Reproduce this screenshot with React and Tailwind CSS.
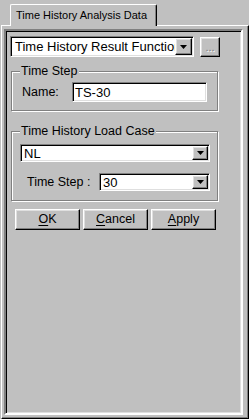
import React from "react";

const sunken =
  "border border-t-[#808080] border-l-[#808080] border-b-white border-r-white shadow-[inset_1px_1px_0_#000,inset_-1px_-1px_0_#dfdfdf]";
const raised =
  "border border-t-white border-l-white border-b-black border-r-black shadow-[inset_-1px_-1px_0_#808080,inset_1px_1px_0_#dfdfdf]";

function Arrow() {
  return (
    <svg width="7" height="4" viewBox="0 0 7 4">
      <path d="M0 0H7L3.5 4Z" fill="#000" />
    </svg>
  );
}

function ArrowBtn({ w = "w-[16px]" }) {
  return (
    <div className={`${raised} ${w} h-full bg-[#c0c0c0] flex items-center justify-center shrink-0`}>
      <Arrow />
    </div>
  );
}

function Combo({ className, text, textCls = "pl-[2px]", btnW }) {
  return (
    <div className={`${sunken} ${className} bg-white flex p-[1px]`}>
      <div className={`flex-1 min-w-0 overflow-hidden whitespace-nowrap flex items-center text-[13px] leading-none ${textCls}`}>
        {text}
      </div>
      <ArrowBtn w={btnW} />
    </div>
  );
}

function Group({ label, className, children }) {
  return (
    <div
      className={`relative border border-[#808080] shadow-[inset_1px_1px_0_#fff,1px_1px_0_#fff] ${className}`}
    >
      <span className="absolute left-[8px] top-[-8px] bg-[#c0c0c0] px-[1px] text-[12.5px] leading-[14px]">
        {label}
      </span>
      {children}
    </div>
  );
}

function Button({ children }) {
  return (
    <div
      className={`${raised} w-[65px] h-[21px] bg-[#c0c0c0] flex items-center justify-center text-[12.5px] leading-none`}
    >
      {children}
    </div>
  );
}

export default function App() {
  return (
    <div className="w-[249px] h-[419px] bg-[#c0c0c0] flex flex-col overflow-hidden text-black font-['Liberation_Sans',Arial,sans-serif]">
      <div className="h-[25px] flex items-end pl-[10px] shrink-0">
        <div className="relative z-10 -mb-[1px] h-[22px] w-[147px] bg-[#c0c0c0] border-t border-l border-white border-r border-r-black rounded-t-[2px] shadow-[inset_-1px_0_0_#808080] flex items-center pl-[5px] text-[11px] leading-none whitespace-nowrap">
          Time History Analysis Data
        </div>
      </div>
      <div className="ml-[1px] w-[248px] h-[394px] border-t border-l border-white border-r border-b border-r-black border-b-black shadow-[inset_-1px_-1px_0_#808080] pt-[3px] pl-[2px] pr-[5px] pb-[3px] flex">
        <div className="flex-1 border-2 border-t-[#808080] border-l-[#808080] border-b-white border-r-white shadow-[inset_1px_1px_0_#000,inset_-1px_-1px_0_#dfdfdf] pl-[4px] pt-[5px] flex flex-col items-start">
          <div className="flex items-start">
            <Combo
              className="w-[184px] h-[21px]"
              text="Time History Result Function"
              textCls="pl-[3px]"
              btnW="w-[17px]"
            />
            <div
              className={`${raised} ml-[6px] mt-[1px] w-[20px] h-[20px] bg-[#c0c0c0] flex items-end justify-center pb-[3px] text-[11px] leading-none text-[#808080] [text-shadow:1px_1px_0_#fff]`}
            >
              ...
            </div>
          </div>

          <Group label="Time Step" className="mt-[14px] ml-[1px] w-[207px] h-[40px]">
            <div className="flex items-center pl-[10px] pt-[10px]">
              <div className="w-[50px] text-[12.5px] leading-none">Name:</div>
              <div className={`${sunken} w-[135px] h-[20px] bg-white flex items-center pl-[2px] text-[13px] leading-none`}>
                TS-30
              </div>
            </div>
          </Group>

          <Group label="Time History Load Case" className="mt-[20px] ml-[1px] w-[207px] h-[70px]">
            <div className="flex flex-col items-start pl-[8px] pt-[12px]">
              <Combo className="w-[190px] h-[18px]" text="NL" />
              <div className="flex items-center mt-[11px]">
                <div className="w-[79px] pl-[7px] text-[12.5px] leading-none whitespace-nowrap">
                  Time Step :
                </div>
                <Combo className="w-[111px] h-[18px]" text="30" />
              </div>
            </div>
          </Group>

          <div className="mt-[8px] ml-[5px] flex gap-[3px]">
            <Button>
              <span className="underline underline-offset-2">O</span>K
            </Button>
            <Button>
              <span className="underline underline-offset-2">C</span>ancel
            </Button>
            <Button>
              <span className="underline underline-offset-2">A</span>pply
            </Button>
          </div>
        </div>
      </div>
    </div>
  );
}
